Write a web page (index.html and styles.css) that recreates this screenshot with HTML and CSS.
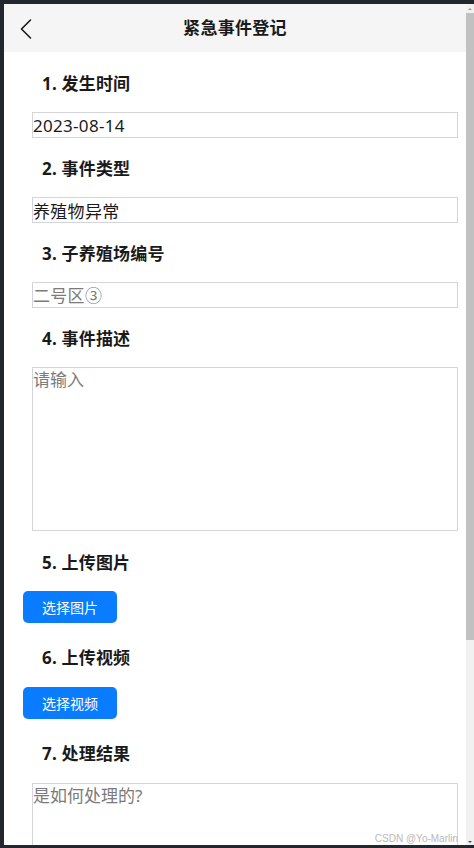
FILE: index.html
```html
<!DOCTYPE html>
<html lang="zh-CN">
<head>
<meta charset="utf-8">
<title>紧急事件登记</title>
<link rel="stylesheet" href="styles.css">
</head>
<body>
<div class="frame">
  <div class="viewport">
    <header class="topbar">
      <svg class="back" width="14" height="22" viewBox="0 0 14 22"><path d="M11.5 2 L2.5 11 L11.5 20" fill="none" stroke="#1a1a1a" stroke-width="1.6" stroke-linecap="round" stroke-linejoin="round"/></svg>
      <h1 class="title">紧急事件登记</h1>
    </header>
    <main class="form">
      <h2 class="label">1. 发生时间</h2>
      <input class="field" type="text" value="2023-08-14" readonly>
      <h2 class="label">2. 事件类型</h2>
      <input class="field" type="text" value="养殖物异常" readonly>
      <h2 class="label">3. 子养殖场编号</h2>
      <input class="field" type="text" placeholder="二号区③">
      <h2 class="label">4. 事件描述</h2>
      <textarea class="area" placeholder="请输入"></textarea>
      <h2 class="label">5. 上传图片</h2>
      <button class="btn" type="button">选择图片</button>
      <h2 class="label label-after-btn">6. 上传视频</h2>
      <button class="btn" type="button">选择视频</button>
      <h2 class="label label-after-btn">7. 处理结果</h2>
      <textarea class="area" placeholder="是如何处理的?"></textarea>
    </main>
    <span class="watermark">CSDN @Yo-Marlin</span>
  </div>
  <div class="scrollbar">
    <span class="arrow arrow-up"></span>
    <div class="thumb"></div>
    <div class="track"></div>
    <span class="arrow arrow-down"></span>
  </div>
</div>
</body>
</html>
```

FILE: styles.css
```css
* { box-sizing: border-box; }
html, body {
  margin: 0;
  padding: 0;
  height: 100%;
  overflow: hidden;
}
body {
  background: #23262c;
  font-family: "Noto Sans", "Noto Sans CJK SC", sans-serif;
  color: #1a1a1a;
}
.frame {
  margin: 4px 0 0 4px;
  height: 841px;
  display: flex;
  background: #ffffff;
}
.viewport {
  position: relative;
  flex: 1;
  overflow: hidden;
  background: #ffffff;
}
.topbar {
  height: 48px;
  background: #f5f5f5;
  display: flex;
  align-items: center;
  justify-content: center;
  position: relative;
}
.back {
  position: absolute;
  left: 15px;
  top: 14px;
}
.title {
  margin: 0;
  font-size: 17px;
  font-weight: 700;
  line-height: 24px;
  letter-spacing: 0.3px;
}
.form {
  display: flex;
  flex-direction: column;
  align-items: flex-start;
  padding-top: 20px;
}
.label {
  margin: 0 0 16px 38px;
  font-size: 17px;
  font-weight: 700;
  line-height: 24px;
  letter-spacing: 0.2px;
}
.field {
  display: block;
  margin: 0 0 19px 28px;
  width: 426px;
  height: 26px;
  padding: 0;
  border: 1px solid #d4d5dc;
  border-radius: 0;
  font-family: "Noto Sans", "Noto Sans CJK SC", sans-serif;
  font-size: 17px;
  letter-spacing: 0.3px;
  color: #1a1a1a;
  background: #fff;
  outline: none;
}
.field::placeholder,
.area::placeholder {
  color: #7b7b7b;
  opacity: 1;
}
.area {
  display: block;
  margin: 0 0 20px 28px;
  width: 426px;
  height: 164px;
  padding: 0;
  border: 1px solid #d4d5dc;
  border-radius: 0;
  resize: none;
  font-family: "Noto Sans", "Noto Sans CJK SC", sans-serif;
  font-size: 17px;
  line-height: 24px;
  color: #1a1a1a;
  background: #fff;
  outline: none;
}
.btn {
  display: block;
  margin: 0 0 0 19px;
  width: 94px;
  height: 32px;
  border: none;
  border-radius: 5px;
  background: #0a7cff;
  color: #ffffff;
  font-family: "Noto Sans CJK SC", sans-serif;
  font-size: 14px;
  padding: 0;
}
.label-after-btn { margin-top: 23px; margin-bottom: 17px; }
.watermark {
  position: absolute;
  right: 8px;
  bottom: 1px;
  font-family: "Liberation Sans", sans-serif;
  font-size: 10px;
  color: #b9b9b9;
}
.scrollbar {
  width: 8px;
  display: flex;
  flex-direction: column;
  background: #f1f1f1;
}
.arrow {
  height: 9px;
  display: block;
  position: relative;
}
.arrow-up::after,
.arrow-down::after {
  content: "";
  position: absolute;
  left: 2px;
  border-left: 2px solid transparent;
  border-right: 2px solid transparent;
}
.arrow-up::after { top: 4px; border-bottom: 2px solid #a3a3a3; }
.arrow-down::after { bottom: 2px; border-top: 2px solid #505050; }
.thumb {
  height: 627px;
  background: #c1c1c1;
}
.track {
  flex: 1;
}
```
